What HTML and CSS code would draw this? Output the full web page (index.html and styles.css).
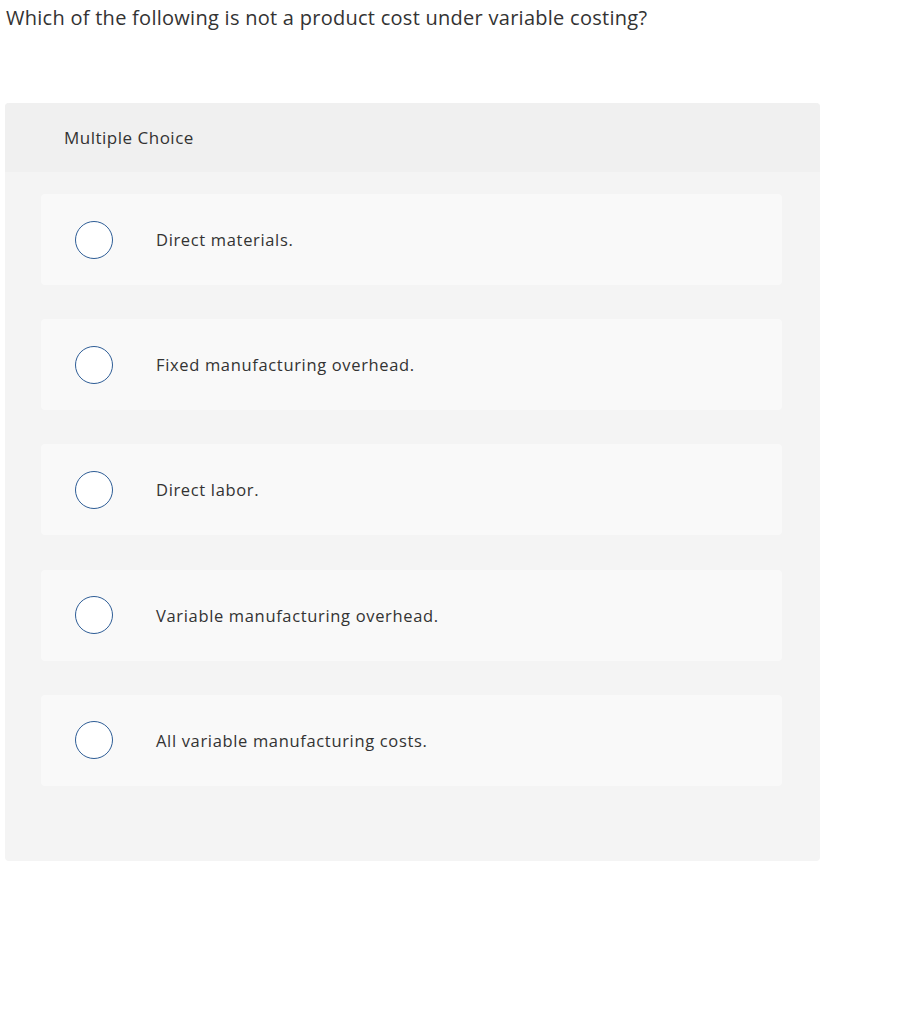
FILE: index.html
```html
<!DOCTYPE html>
<html>
<head>
<meta charset="utf-8">
<link rel="stylesheet" href="styles.css">
</head>
<body>
<div class="question">Which of the following is not a product cost under variable costing?</div>
<div class="panel">
  <div class="panel-header">Multiple Choice</div>
  <div class="panel-body">
    <div class="option"><span class="radio"></span><span class="label">Direct materials.</span></div>
    <div class="option"><span class="radio"></span><span class="label">Fixed manufacturing overhead.</span></div>
    <div class="option"><span class="radio"></span><span class="label">Direct labor.</span></div>
    <div class="option"><span class="radio"></span><span class="label">Variable manufacturing overhead.</span></div>
    <div class="option"><span class="radio"></span><span class="label">All variable manufacturing costs.</span></div>
  </div>
</div>
</body>
</html>
```
FILE: styles.css
```css
html, body {
  margin: 0;
  padding: 0;
  background: #ffffff;
}
body {
  font-family: "Open Sans", Lato, sans-serif;
  color: #333333;
}
.question {
  font-size: 20px;
  letter-spacing: 0.27px;
  line-height: 24px;
  padding: 6px 0 0 6px;
  height: 103px;
  box-sizing: border-box;
}
.panel {
  margin-left: 5px;
  width: 815px;
  background: #f4f4f4;
  border-radius: 4px;
  overflow: hidden;
}
.panel-header {
  height: 69px;
  background: #f0f0f0;
  display: flex;
  align-items: center;
  padding-left: 59px;
  font-size: 17px;
  letter-spacing: 0.5px;
  box-sizing: border-box;
}
.panel-body {
  padding: 22px 38px 75px 36px;
  display: flex;
  flex-direction: column;
  gap: 34.2px;
}
.option {
  height: 91px;
  background: #f9f9f9;
  border-radius: 4px;
  display: flex;
  align-items: center;
  padding-left: 34px;
  box-sizing: border-box;
}
.radio {
  width: 38px;
  height: 38px;
  box-sizing: border-box;
  border: 1.6px solid #2e5d96;
  border-radius: 50%;
  background: #ffffff;
  flex: none;
}
.label {
  margin-left: 43px;
  font-size: 16.5px;
  letter-spacing: 0.66px;
}
```
